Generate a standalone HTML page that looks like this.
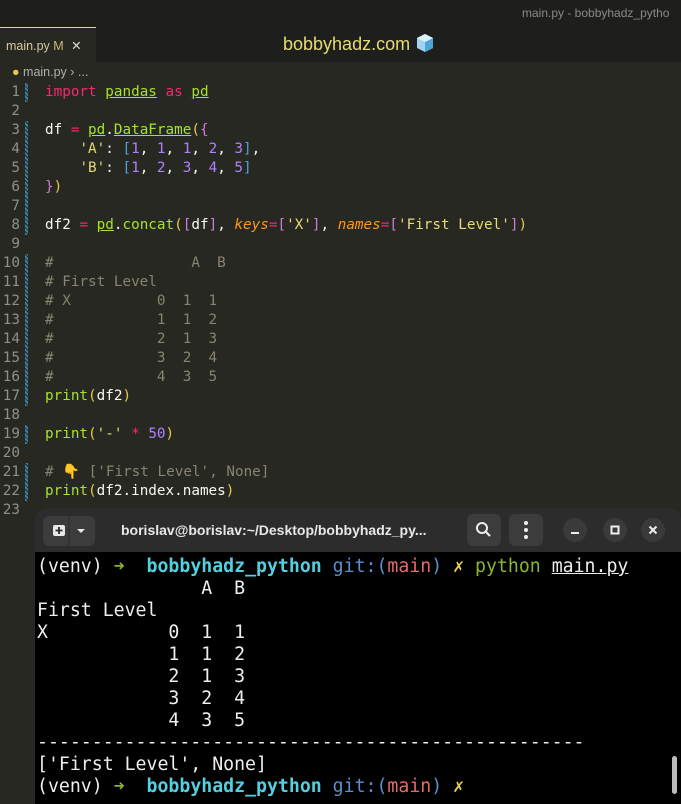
<!DOCTYPE html>
<html><head><meta charset="utf-8"><style>
*{margin:0;padding:0;box-sizing:border-box}
body{width:681px;height:804px;background:#272822;position:relative;overflow:hidden;font-family:"Liberation Sans",sans-serif}
.top{position:absolute;left:0;top:0;width:681px;height:27px;background:#1e1f1c;color:#8a8a85;font-size:12px}
.tabs{position:absolute;left:0;top:27px;width:681px;height:35px;background:#1e1f1c}
.tab{position:absolute;left:0;top:0;width:96px;height:35px;background:#272822;border-top:1px solid #e6db74;color:#d6c8a0;font-size:12.5px;padding:10px 0 0 6px}
.brand{position:absolute;left:283px;top:33px;color:#e6db74;font-size:18px}
.crumb{position:absolute;left:12px;top:65px;color:#b0b0a8;font-size:12.5px}
.code{position:absolute;left:0;top:83px;font-family:"DejaVu Sans Mono",monospace;font-size:14.3px;line-height:19px;white-space:pre;color:#f8f8f2}
.ln{position:absolute;left:0;width:20px;text-align:right;color:#8f908a}
.gut{position:absolute;left:25px;width:3px;background:repeating-linear-gradient(45deg,#3a7fa0 0 2px,#272822 2px 3px)}
.cl{position:absolute;left:45px}
.k{color:#f92672}.g{color:#a6e22e}.u{text-decoration:underline}.s{color:#e6db74}.n{color:#ae81ff}.c{color:#88846f}.y{color:#e6c84c}.p{color:#c57fd6}.b{color:#4aa3d6}.i{color:#fd971f;font-style:italic}
.term{position:absolute;left:35px;top:508px;width:646px;height:296px;background:#000;border-radius:10px 10px 0 0;overflow:hidden}
.tbar{height:44px;background:#2c2c2c;position:relative}
.btn{position:absolute;background:#3c3c3c;border-radius:6px}
.circ{position:absolute;width:24px;height:24px;border-radius:50%;background:#3a3a3a;top:10px}
.tt{position:absolute;left:86px;top:14px;color:#e8e8e8;font-size:14px;font-weight:bold}
.tout{position:absolute;left:2px;top:48px;font-family:"DejaVu Sans Mono",monospace;font-size:18.2px;line-height:22px;white-space:pre;color:#eee}
.tc{color:#52d0e0;font-weight:bold}.tg{color:#8ab52e}.tb{color:#5d8fd0}.tr{color:#e66a6a}.ty{color:#e8d24a}
</style></head><body>
<div class="top"><span style="position:absolute;left:522px;top:6px">main.py - bobbyhadz_pytho</span></div>
<div class="tabs"><div class="tab">main.py <span style="color:#c9b87a">M</span> <span style="color:#ddd;margin-left:4px">✕</span></div></div>
<div class="brand">bobbyhadz.com <svg width="20" height="20" viewBox="0 0 20 20" style="vertical-align:-3px"><path d="M10 1 18 5 18 15 10 19 2 15 2 5Z" fill="#9fd3f0"/><path d="M10 9 18 5 18 15 10 19Z" fill="#4fa4d8"/><path d="M2 5 10 1 18 5 10 9Z" fill="#dff2fc"/></svg></div>
<div class="crumb"><span style="color:#e6c84c">●</span> main.py › ...</div>
<div class="code">
<div class="gut" style="top:0;height:19px"></div>
<div class="gut" style="top:38px;height:114px"></div>
<div class="gut" style="top:171px;height:152px"></div>
<div class="gut" style="top:342px;height:19px"></div>
<div class="gut" style="top:380px;height:38px"></div>
<div class="ln" style="top:0">1</div><div class="cl" style="top:0"><span class="k">import</span> <span class="g u">pandas</span> <span class="k">as</span> <span class="g u">pd</span></div>
<div class="ln" style="top:19px">2</div>
<div class="ln" style="top:38px">3</div><div class="cl" style="top:38px">df <span class="k">=</span> <span class="g u">pd</span>.<span class="g u">DataFrame</span><span class="y">(</span><span class="p">{</span></div>
<div class="ln" style="top:57px">4</div><div class="cl" style="top:57px">    <span class="s">'A'</span>: <span class="b">[</span><span class="n">1</span>, <span class="n">1</span>, <span class="n">1</span>, <span class="n">2</span>, <span class="n">3</span><span class="b">]</span>,</div>
<div class="ln" style="top:76px">5</div><div class="cl" style="top:76px">    <span class="s">'B'</span>: <span class="b">[</span><span class="n">1</span>, <span class="n">2</span>, <span class="n">3</span>, <span class="n">4</span>, <span class="n">5</span><span class="b">]</span></div>
<div class="ln" style="top:95px">6</div><div class="cl" style="top:95px"><span class="p">}</span><span class="y">)</span></div>
<div class="ln" style="top:114px">7</div>
<div class="ln" style="top:133px">8</div><div class="cl" style="top:133px">df2 <span class="k">=</span> <span class="g u">pd</span>.<span class="g">concat</span><span class="y">(</span><span class="p">[</span>df<span class="p">]</span>, <span class="i">keys</span><span class="k">=</span><span class="p">[</span><span class="s">'X'</span><span class="p">]</span>, <span class="i">names</span><span class="k">=</span><span class="p">[</span><span class="s">'First Level'</span><span class="p">]</span><span class="y">)</span></div>
<div class="ln" style="top:152px">9</div>
<div class="ln" style="top:171px">10</div><div class="cl c" style="top:171px">#                A  B</div>
<div class="ln" style="top:190px">11</div><div class="cl c" style="top:190px"># First Level</div>
<div class="ln" style="top:209px">12</div><div class="cl c" style="top:209px"># X          0  1  1</div>
<div class="ln" style="top:228px">13</div><div class="cl c" style="top:228px">#            1  1  2</div>
<div class="ln" style="top:247px">14</div><div class="cl c" style="top:247px">#            2  1  3</div>
<div class="ln" style="top:266px">15</div><div class="cl c" style="top:266px">#            3  2  4</div>
<div class="ln" style="top:285px">16</div><div class="cl c" style="top:285px">#            4  3  5</div>
<div class="ln" style="top:304px">17</div><div class="cl" style="top:304px"><span class="g">print</span><span class="y">(</span>df2<span class="y">)</span></div>
<div class="ln" style="top:323px">18</div>
<div class="ln" style="top:342px">19</div><div class="cl" style="top:342px"><span class="g">print</span><span class="y">(</span><span class="s">'-'</span> <span class="k">*</span> <span class="n">50</span><span class="y">)</span></div>
<div class="ln" style="top:361px">20</div>
<div class="ln" style="top:380px">21</div><div class="cl c" style="top:380px"># <span class="y">👇</span> ['First Level', None]</div>
<div class="ln" style="top:399px">22</div><div class="cl" style="top:399px"><span class="g">print</span><span class="y">(</span>df2.index.names<span class="y">)</span></div>
<div class="ln" style="top:418px">23</div>
</div>
<div class="term">
<div class="tbar">
<div class="btn" style="left:8px;top:8px;width:52px;height:30px"><svg width="52" height="30"><rect x="10" y="9" width="12" height="11" rx="2" fill="#e8e8e8"/><path d="M16 11v7M12.5 14.5h7" stroke="#2c2c2c" stroke-width="1.8"/><path d="M34 13l4 4 4-4z" fill="#e8e8e8"/><line x1="26" y1="0" x2="26" y2="30" stroke="#2c2c2c"/></svg></div>
<div class="tt">borislav@borislav:~/Desktop/bobbyhadz_py...</div>
<div class="btn" style="left:432px;top:6px;width:34px;height:32px"><svg width="34" height="32"><circle cx="15" cy="14" r="5" fill="none" stroke="#eee" stroke-width="2"/><path d="M19 18l4 4" stroke="#eee" stroke-width="2.2"/></svg></div>
<div class="btn" style="left:474px;top:6px;width:34px;height:32px"><svg width="34" height="32"><circle cx="17" cy="9" r="2" fill="#eee"/><circle cx="17" cy="16" r="2" fill="#eee"/><circle cx="17" cy="23" r="2" fill="#eee"/></svg></div>
<div class="circ" style="left:528px"><svg width="24" height="24"><path d="M8 15h8" stroke="#eee" stroke-width="2"/></svg></div>
<div class="circ" style="left:568px"><svg width="24" height="24"><rect x="8.5" y="8.5" width="7" height="7" fill="none" stroke="#eee" stroke-width="2"/></svg></div>
<div class="circ" style="left:606px"><svg width="24" height="24"><path d="M8.5 8.5l7 7M15.5 8.5l-7 7" stroke="#eee" stroke-width="2"/></svg></div>
</div>
<div class="tout">(venv) <span class="tg">➜</span>  <span class="tc">bobbyhadz_python</span> <span class="tb">git:(</span><span class="tr">main</span><span class="tb">)</span> <span class="ty">✗</span> <span class="tg">python</span> <span class="u">main.py</span>
               A  B
First Level
X           0  1  1
            1  1  2
            2  1  3
            3  2  4
            4  3  5
--------------------------------------------------
['First Level', None]
(venv) <span class="tg">➜</span>  <span class="tc">bobbyhadz_python</span> <span class="tb">git:(</span><span class="tr">main</span><span class="tb">)</span> <span class="ty">✗</span></div>
<div style="position:absolute;right:4px;top:248px;width:5px;height:38px;background:#bbb;border-radius:3px"></div>
</div>
</body></html>
